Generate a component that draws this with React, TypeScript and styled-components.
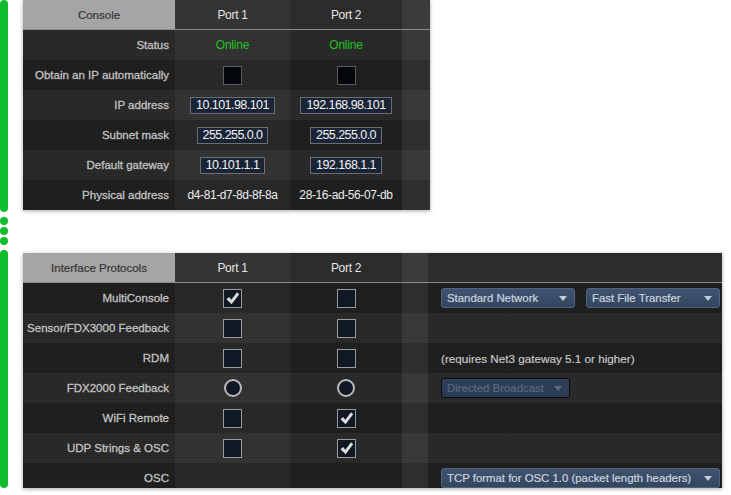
import React, { FC } from "react";
import styled, { createGlobalStyle } from "styled-components";

const GlobalStyle = createGlobalStyle`
  body {
    margin: 0;
    background: #ffffff;
    font-family: "Liberation Sans", Arial, sans-serif;
  }
`;

//layout
const Page = styled.div`
  display: flex;
  width: 731px;
  height: 495px;
  overflow: hidden;
`;

const Rail = styled.div`
  display: flex;
  flex-direction: column;
  align-items: center;
  width: 8px;
`;

const RailBar = styled.div<{ $h: number }>`
  width: 8px;
  height: ${(p) => p.$h}px;
  background: #10bd2e;
  border-radius: 4px;
`;

const RailDots = styled.div`
  display: flex;
  flex-direction: column;
  gap: 2px;
  margin: 5px 0;
`;

const RailDot = styled.div`
  width: 8px;
  height: 8px;
  border-radius: 50%;
  background: #10bd2e;
`;

const Content = styled.div`
  display: flex;
  flex-direction: column;
  gap: 43px;
  margin-left: 15px;
`;

const Panel = styled.div<{ $w: number; $h: number }>`
  width: ${(p) => p.$w}px;
  height: ${(p) => p.$h}px;
  overflow: hidden;
  background: #262626;
  box-shadow: 0 1px 4px rgba(0, 0, 0, 0.35);
`;

const scan = `repeating-linear-gradient(to bottom, rgba(0,0,0,0.13) 0px, rgba(0,0,0,0.13) 1px, transparent 1px, transparent 2px)`;

const Row = styled.div<{ $cols: string; $light?: boolean }>`
  display: grid;
  grid-template-columns: ${(p) => p.$cols};
  height: 30px;
  background: ${scan}, ${(p) => (p.$light ? "#2c2c2c" : "#212121")};
`;

const HeaderRow = styled(Row)`
  height: 29px;
  border-bottom: 1px solid #8d8d8d;
  background: ${scan}, #2f2f2f;
`;

const Cell = styled.div<{ $tint?: number }>`
  display: flex;
  align-items: center;
  justify-content: center;
  background: rgba(255, 255, 255, ${(p) => p.$tint || 0});
  min-width: 0;
  white-space: nowrap;
`;

const ExtraCell = styled(Cell)`
  justify-content: flex-start;
  gap: 11px;
  padding-left: 13px;
`;

const HeadTitle = styled.div`
  display: flex;
  align-items: center;
  justify-content: center;
  background: #a5a5a5;
  color: #363636;
  font-size: 11.5px;
  -webkit-text-stroke: 0.2px #363636;
`;

const PortTitle = styled.span`
  font-size: 12px;
  letter-spacing: -0.3px;
  color: #e4e4e4;
`;

const Label = styled.div`
  display: flex;
  align-items: center;
  justify-content: flex-end;
  padding-right: 6px;
  color: #c2c2c2;
  font-size: 11.5px;
  -webkit-text-stroke: 0.3px #c2c2c2;
  white-space: nowrap;
`;

const Status = styled.span`
  font-size: 12px;
  letter-spacing: -0.2px;
  color: #1fc31f;
`;

const Value = styled.span`
  font-size: 12px;
  letter-spacing: -0.4px;
  color: #ececec;
`;

const Field = styled.span`
  display: inline-block;
  height: 15px;
  line-height: 15px;
  padding: 0 5px;
  background: #1a2437;
  border: 1px solid #6e6e6e;
  font-size: 12.5px;
  letter-spacing: -0.55px;
  color: #f2f2f2;
`;

const Box = styled.span<{ $dark?: boolean }>`
  display: inline-flex;
  align-items: center;
  justify-content: center;
  box-sizing: border-box;
  width: 19px;
  height: 19px;
  background: ${(p) => (p.$dark ? "#03070b" : "#0f1824")};
  border: ${(p) => (p.$dark ? "1px solid #5c5c5c" : "1.5px solid #9a9a9a")};
`;

const Radio = styled.span`
  display: inline-block;
  box-sizing: border-box;
  width: 18px;
  height: 18px;
  border-radius: 50%;
  background: #101826;
  border: 2px solid #b9b9b9;
`;

const Select = styled.div<{ $w: number; $off?: boolean }>`
  display: flex;
  flex-shrink: 0;
  align-items: center;
  justify-content: space-between;
  box-sizing: border-box;
  width: ${(p) => p.$w}px;
  height: 20px;
  padding: 0 7px 0 5px;
  border-radius: 3px;
  background: ${(p) =>
    p.$off
      ? "linear-gradient(#2f4058, #2a3a51)"
      : "linear-gradient(#3f5370, #34465f)"};
  border: 1px solid ${(p) => (p.$off ? "#0c0c0c" : "#50637d")};
  color: ${(p) => (p.$off ? "#5a6b82" : "#cdd4de")};
  font-size: 11.4px;
  -webkit-text-stroke: 0.2px ${(p) => (p.$off ? "#5a6b82" : "#cdd4de")};
`;

const Caret = styled.span<{ $off?: boolean }>`
  width: 0;
  height: 0;
  border-left: 4px solid transparent;
  border-right: 4px solid transparent;
  border-top: 5px solid ${(p) => (p.$off ? "#5a6b82" : "#c3cbd6")};
`;

const Note = styled.span`
  color: #c6c6c6;
  font-size: 11.7px;
  -webkit-text-stroke: 0.2px #c6c6c6;
`;

const Check: FC = () => (
  <svg width="15" height="15" viewBox="0 0 16 16">
    <path
      d="M1.6 8.8 L4.4 6.5 L6.7 9.4 L12.8 1.4 L15.2 3.4 L7 14.2 Z"
      fill="#dadada"
    />
  </svg>
);

const CheckBox: FC<{ on?: boolean; dark?: boolean }> = ({ on, dark }) => (
  <Box $dark={dark}>{on && <Check />}</Box>
);

const Dropdown: FC<{ text: string; w: number; off?: boolean }> = ({ text, w, off }) => (
  <Select $w={w} $off={off}>
    <span>{text}</span>
    <Caret $off={off} />
  </Select>
);

const C1 = "152px 115px 112px 28px";
const C2 = "152px 115px 112px 26px 294px";

const T1 = 0.045;
const TN = 0.075;

type ConsoleRow = { label: string; a: React.ReactNode; b: React.ReactNode };

const consoleRows: ConsoleRow[] = [
  { label: "Status", a: <Status>Online</Status>, b: <Status>Online</Status> },
  { label: "Obtain an IP automatically", a: <CheckBox dark />, b: <CheckBox dark /> },
  { label: "IP address", a: <Field>10.101.98.101</Field>, b: <Field>192.168.98.101</Field> },
  { label: "Subnet mask", a: <Field>255.255.0.0</Field>, b: <Field>255.255.0.0</Field> },
  { label: "Default gateway", a: <Field>10.101.1.1</Field>, b: <Field>192.168.1.1</Field> },
  { label: "Physical address", a: <Value>d4-81-d7-8d-8f-8a</Value>, b: <Value>28-16-ad-56-07-db</Value> },
];

type ProtoRow = { label: string; a?: React.ReactNode; b?: React.ReactNode; extra?: React.ReactNode };

const protoRows: ProtoRow[] = [
  {
    label: "MultiConsole",
    a: <CheckBox on />,
    b: <CheckBox />,
    extra: (
      <>
        <Dropdown text="Standard Network" w={134} />
        <Dropdown text="Fast File Transfer" w={134} />
      </>
    ),
  },
  { label: "Sensor/FDX3000 Feedback", a: <CheckBox />, b: <CheckBox /> },
  {
    label: "RDM",
    a: <CheckBox />,
    b: <CheckBox />,
    extra: <Note>(requires Net3 gateway 5.1 or higher)</Note>,
  },
  {
    label: "FDX2000 Feedback",
    a: <Radio />,
    b: <Radio />,
    extra: <Dropdown text="Directed Broadcast" w={129} off />,
  },
  { label: "WiFi Remote", a: <CheckBox />, b: <CheckBox on /> },
  { label: "UDP Strings & OSC", a: <CheckBox />, b: <CheckBox on /> },
  {
    label: "OSC",
    extra: <Dropdown text="TCP format for OSC 1.0 (packet length headers)" w={279} />,
  },
];

const App: FC = () => {
  return (
    <>
      <GlobalStyle />
      <Page>
        <Rail>
          <RailBar $h={212} />
          <RailDots>
            <RailDot />
            <RailDot />
            <RailDot />
          </RailDots>
          <RailBar $h={238} />
        </Rail>
        <Content>
          <Panel $w={407} $h={210}>
            <HeaderRow $cols={C1}>
              <HeadTitle>Console</HeadTitle>
              <Cell $tint={T1}>
                <PortTitle>Port 1</PortTitle>
              </Cell>
              <Cell>
                <PortTitle>Port 2</PortTitle>
              </Cell>
              <Cell $tint={TN} />
            </HeaderRow>
            {consoleRows.map((r, i) => (
              <Row key={r.label} $cols={C1} $light={i % 2 === 0}>
                <Label>{r.label}</Label>
                <Cell $tint={T1}>{r.a}</Cell>
                <Cell>{r.b}</Cell>
                <Cell $tint={TN} />
              </Row>
            ))}
          </Panel>

          <Panel $w={699} $h={235}>
            <HeaderRow $cols={C2}>
              <HeadTitle>Interface Protocols</HeadTitle>
              <Cell $tint={T1}>
                <PortTitle>Port 1</PortTitle>
              </Cell>
              <Cell>
                <PortTitle>Port 2</PortTitle>
              </Cell>
              <Cell $tint={TN} />
              <Cell />
            </HeaderRow>
            {protoRows.map((r, i) => (
              <Row key={r.label} $cols={C2} $light={i % 2 === 1}>
                <Label>{r.label}</Label>
                <Cell $tint={T1}>{r.a}</Cell>
                <Cell>{r.b}</Cell>
                <Cell $tint={TN} />
                <ExtraCell>{r.extra}</ExtraCell>
              </Row>
            ))}
          </Panel>
        </Content>
      </Page>
    </>
  );
};

export default App;
